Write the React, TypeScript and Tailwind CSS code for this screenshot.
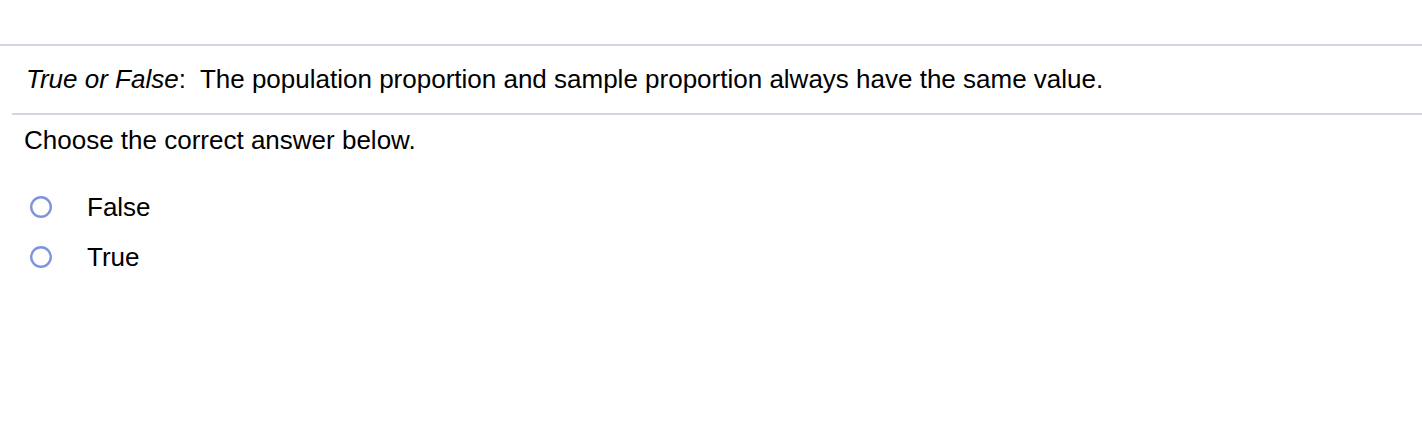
import React from "react";

function Radio() {
  return (
    <svg width="26" height="26" viewBox="0 0 26 26" className="shrink-0">
      <circle cx="13" cy="13" r="9.8" fill="white" stroke="#7f93e0" strokeWidth="2.4" />
    </svg>
  );
}

export default function App() {
  return (
    <div className="w-[1422px] h-[442px] bg-white text-black font-['Liberation_Sans',Arial,sans-serif] text-[26px] leading-[39px]">
      <div className="h-[44px]" />
      <div className="h-[2px] bg-[#d3d5de]" />
      <div className="h-[67px] flex items-center pl-[26px]">
        <p>
          <i>True or False</i>:&nbsp; The population proportion and sample proportion always have the same value.
        </p>
      </div>
      <div className="ml-[12px] h-[2px] bg-[#d3d5de]" />
      <div className="pl-[24px] pt-[6px]">
        <p>Choose the correct answer below.</p>
        <div className="mt-[33px] flex flex-col gap-[22px]">
          <div className="flex items-center h-[28px]">
            <div className="ml-[4px]"><Radio /></div>
            <span className="ml-[33px]">False</span>
          </div>
          <div className="flex items-center h-[28px]">
            <div className="ml-[4px]"><Radio /></div>
            <span className="ml-[33px]">True</span>
          </div>
        </div>
      </div>
    </div>
  );
}
